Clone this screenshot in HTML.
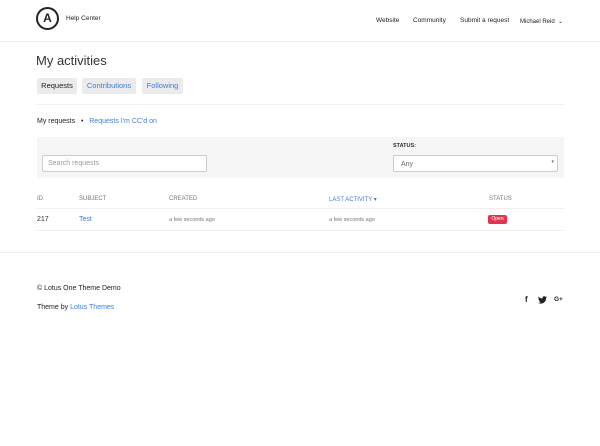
<!DOCTYPE html>
<html><head><style>
*{margin:0;padding:0;box-sizing:border-box}
body{width:600px;height:446px;background:#fff;font-family:"Liberation Sans",sans-serif;color:#333;position:relative;overflow:hidden}
.a{position:absolute;white-space:nowrap}
.blue{color:#3b7ed8}
.hr{position:absolute;height:1px;background:#eee}
.tab{position:absolute;top:78px;height:16px;background:#ebebeb;border-radius:2px;font-size:7.5px;line-height:16px;text-align:center}
.th{font-size:6px;color:#777;top:196px;position:absolute}
</style></head><body>
<div class="a" style="left:36px;top:7px;width:23px;height:23px;border:2px solid #222;border-radius:50%;font-size:12px;font-weight:bold;text-align:center;line-height:19px;color:#222">A</div>
<div class="a" style="left:66px;top:15px;font-size:6.5px;color:#222">Help Center</div>
<div class="a" style="left:376px;top:17px;font-size:6.5px;color:#222">Website</div>
<div class="a" style="left:413px;top:17px;font-size:6.5px;color:#222">Community</div>
<div class="a" style="left:460px;top:17px;font-size:6.5px;color:#222">Submit a request</div>
<div class="a" style="left:520px;top:18px;font-size:6px;color:#222">Michael Reid &nbsp;⌄</div>
<div class="hr" style="left:0;width:600px;top:41px"></div>
<div class="a" style="left:36px;top:53px;font-size:13px;color:#333">My activities</div>
<div class="tab" style="left:37px;width:40px;color:#222">Requests</div>
<div class="tab blue" style="left:82px;width:54px">Contributions</div>
<div class="tab blue" style="left:142px;width:41px">Following</div>
<div class="hr" style="left:37px;width:527px;top:104px"></div>
<div class="a" style="left:37px;top:118px;font-size:7px;color:#222">My requests &nbsp;&nbsp;•&nbsp;&nbsp; <span class="blue">Requests I'm CC'd on</span></div>
<div class="a" style="left:37px;top:137px;width:527px;height:41px;background:#f5f5f5"></div>
<div class="a" style="left:42px;top:155px;width:165px;height:17px;background:#fff;border:1px solid #ccc;border-radius:2px;font-size:7px;color:#999;padding:4px 5px">Search requests</div>
<div class="a" style="left:393px;top:143px;font-size:5.5px;color:#333;font-weight:bold">STATUS:</div>
<div class="a" style="left:393px;top:155px;width:165px;height:17px;background:#fff;border:1px solid #ccc;border-radius:2px;font-size:7px;color:#666;padding:5px 7px">Any<span style="position:absolute;right:3px;top:3px;font-size:5px">▾</span></div>
<div class="th" style="left:37px">ID</div>
<div class="th" style="left:79px">SUBJECT</div>
<div class="th" style="left:169px">CREATED</div>
<div class="th blue" style="left:329px;color:#3b7ed8">LAST ACTIVITY ▾</div>
<div class="th" style="left:489px">STATUS</div>
<div class="hr" style="left:37px;width:527px;top:208px"></div>
<div class="a" style="left:37px;top:216px;font-size:7px">217</div>
<div class="a blue" style="left:79px;top:216px;font-size:7px">Test</div>
<div class="a" style="left:169px;top:217px;font-size:5.5px;color:#777">a few seconds ago</div>
<div class="a" style="left:329px;top:217px;font-size:5.5px;color:#777">a few seconds ago</div>
<div class="a" style="left:488px;top:215px;width:19px;height:9px;background:#e0344f;border-radius:2px;color:#fff;font-size:5px;text-align:center;line-height:9px">Open</div>
<div class="hr" style="left:37px;width:527px;top:230px"></div>
<div class="hr" style="left:0;width:600px;top:252px"></div>
<div class="a" style="left:37px;top:285px;font-size:7px;color:#222">© Lotus One Theme Demo</div>
<div class="a" style="left:37px;top:304px;font-size:7px;color:#222">Theme by <span class="blue">Lotus Themes</span></div>
<div class="a" style="left:525px;top:295px;font-size:8px;font-weight:bold;color:#222">f</div>
<svg class="a" style="left:538px;top:296px" width="9" height="8" viewBox="0 0 24 20"><path fill="#222" d="M24 2.4c-.9.4-1.8.7-2.8.8 1-.6 1.8-1.6 2.2-2.7-1 .6-2 1-3.1 1.2C19.4.7 18.1 0 16.6 0c-2.7 0-4.9 2.2-4.9 4.9 0 .4 0 .8.1 1.1C7.7 5.8 4.1 3.9 1.7.9c-.4.7-.7 1.6-.7 2.5 0 1.7.9 3.2 2.2 4.1-.8 0-1.6-.2-2.2-.6v.1c0 2.4 1.7 4.4 3.9 4.8-.4.1-.8.2-1.3.2-.3 0-.6 0-.9-.1.6 2 2.4 3.4 4.6 3.4-1.7 1.3-3.8 2.1-6.1 2.1-.4 0-.8 0-1.2-.1C2.2 18.8 4.8 19.6 7.5 19.6c9.1 0 14-7.5 14-14v-.6c1-.7 1.8-1.6 2.5-2.6z"/></svg>
<div class="a" style="left:554px;top:296px;font-size:6.5px;font-weight:bold;color:#222">G+</div>
</body></html>
